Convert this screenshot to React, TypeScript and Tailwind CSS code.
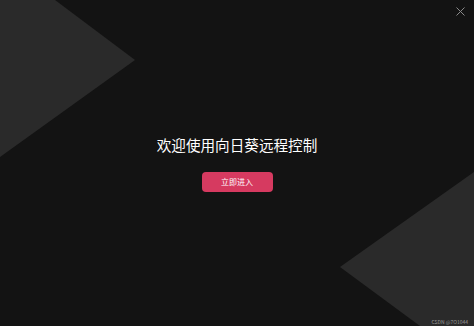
import React from 'react';

const FONT = '"Noto Sans CJK SC", "Noto Sans", "Liberation Sans", sans-serif';

const App: React.FC = () => {
  return (
    <div
      className="relative w-[474px] h-[326px] overflow-hidden bg-[#131313]"
      style={{ fontFamily: FONT }}
    >
      {/* Background shapes */}
      <svg className="absolute inset-0" width="474" height="326" viewBox="0 0 474 326">
        <polygon points="0,0 55,0 135,60 0,157" fill="#2a2a2a" />
        <polygon points="474,172 340,267 420,326 474,326" fill="#2a2a2a" />
      </svg>

      {/* Close */}
      <button className="absolute top-[7px] right-[9px] w-[9px] h-[9px] flex items-center justify-center">
        <svg width="9" height="9" viewBox="0 0 9 9">
          <path d="M0.5 0.5 L8.5 8.5 M8.5 0.5 L0.5 8.5" stroke="#8a8a8a" strokeWidth="1" />
        </svg>
      </button>

      {/* Main Content */}
      <main className="relative h-full flex flex-col items-center justify-center gap-[17px]">
        <h1 className="text-[14.6px] leading-[20px] text-white tracking-normal">
          欢迎使用向日葵远程控制
        </h1>
        <button className="w-[71px] h-[20px] rounded-[4px] bg-[#d63a60] text-white text-[8px] leading-none flex items-center justify-center">
          立即进入
        </button>
      </main>

      {/* Watermark */}
      <span className="absolute right-[6px] bottom-[2px] text-[5px] leading-none text-[#9a9a9a]">
        CSDN @7O1044
      </span>
    </div>
  );
};

export default App;
